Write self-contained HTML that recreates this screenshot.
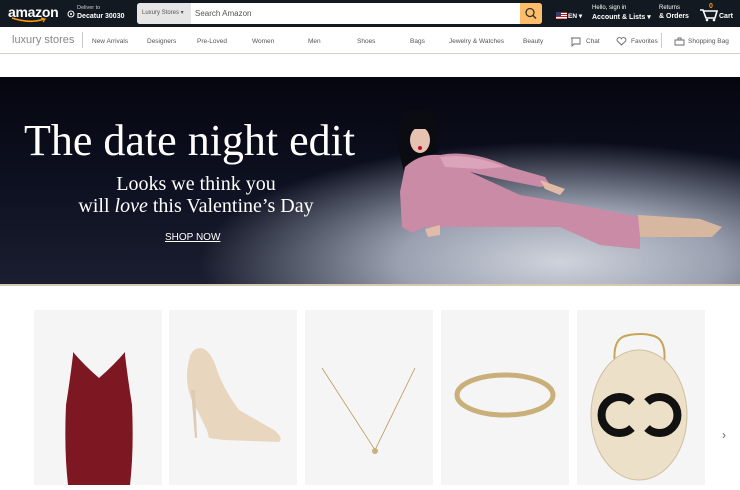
<!DOCTYPE html>
<html><head><meta charset="utf-8"><style>
*{margin:0;padding:0;box-sizing:border-box}
body{width:740px;height:485px;overflow:hidden;background:#fff;font-family:"Liberation Sans",sans-serif;position:relative}
.top{position:absolute;left:0;top:0;width:740px;height:27px;background:#131921;color:#fff}
.a{position:absolute;white-space:nowrap}
.nav{position:absolute;top:27px;left:0;width:740px;height:27px;border-bottom:1px solid #d9cfc2;font-size:6.5px;color:#555}
.banner{position:absolute;left:0;top:77px;width:740px;height:209px;background:radial-gradient(ellipse 360px 120px at 560px 185px,#cfd3dc 0%,#9aa0b0 45%,rgba(20,22,40,0) 100%),linear-gradient(180deg,#05060f 0%,#0d1020 50%,#1a1e30 100%);overflow:hidden;border-bottom:2px solid #d8c9ae}
.serif{font-family:"Liberation Serif",serif;color:#fff}
.card{position:absolute;top:310px;width:128px;height:175px;background:#f5f5f5}
</style></head><body>
<div class="top">
 <div class="a" style="left:8px;top:4px;font-size:14px;font-weight:bold;letter-spacing:-0.3px">amazon</div>
 <svg class="a" style="left:10px;top:17px" width="40" height="6"><path d="M2 1 Q20 7 34 2" stroke="#f90" stroke-width="1.6" fill="none"/><path d="M31 1 L35 2 L33 5" stroke="#f90" stroke-width="1.2" fill="none"/></svg>
 <svg class="a" style="left:67px;top:10px" width="8" height="9"><circle cx="4" cy="4" r="3" stroke="#fff" fill="none" stroke-width="1"/><circle cx="4" cy="4" r="1" fill="#fff"/></svg>
 <div class="a" style="left:77px;top:5px;font-size:5.5px;color:#ccc">Deliver to</div>
 <div class="a" style="left:77px;top:13px;font-size:7px;font-weight:bold">Decatur 30030</div>
 <div class="a" style="left:137px;top:3px;width:405px;height:21px;background:#fff;border-radius:3px;overflow:hidden">
  <div class="a" style="left:0;top:0;width:54px;height:21px;background:#e6e6e6;color:#555;font-size:6px;line-height:21px;padding-left:5px">Luxury Stores ▾</div>
  <div class="a" style="left:58px;top:0;line-height:21px;font-size:8px;color:#555">Search Amazon</div>
  <div class="a" style="right:0;top:0;width:22px;height:21px;background:#febd69"><svg width="22" height="21"><circle cx="10" cy="9.5" r="4" stroke="#333" stroke-width="1.3" fill="none"/><path d="M13 12.5L16 15.5" stroke="#333" stroke-width="1.5"/></svg></div>
 </div>
 <div class="a" style="left:556px;top:12px;width:11px;height:7px;background:linear-gradient(#b22 0 15%,#fff 15% 30%,#b22 30% 45%,#fff 45% 60%,#b22 60% 75%,#fff 75% 90%,#b22 90%)"><div style="width:5px;height:4px;background:#3c3b6e"></div></div>
 <div class="a" style="left:568px;top:12px;font-size:6.5px;font-weight:bold">EN ▾</div>
 <div class="a" style="left:592px;top:5px;font-size:6px">Hello, sign in</div>
 <div class="a" style="left:592px;top:13px;font-size:7px;font-weight:bold">Account &amp; Lists ▾</div>
 <div class="a" style="left:659px;top:5px;font-size:6px">Returns</div>
 <div class="a" style="left:659px;top:13px;font-size:7px;font-weight:bold">&amp; Orders</div>
 <svg class="a" style="left:699px;top:5px" width="20" height="17"><path d="M1 5H4L7 13H16L18 6H5" stroke="#fff" stroke-width="1.6" fill="none"/><circle cx="8" cy="15" r="1.3" fill="#fff"/><circle cx="15" cy="15" r="1.3" fill="#fff"/></svg>
 <div class="a" style="left:709px;top:3px;font-size:7px;font-weight:bold;color:#f90">0</div>
 <div class="a" style="left:719px;top:13px;font-size:7px;font-weight:bold">Cart</div>
</div>
<div class="nav">
 <div class="a" style="left:12px;top:7px;font-size:11px;color:#888">luxury stores</div>
 <div class="a" style="left:82px;top:5px;width:1px;height:16px;background:#ccc"></div>
 <div class="a" style="left:92px;top:11px">New Arrivals</div>
 <div class="a" style="left:147px;top:11px">Designers</div>
 <div class="a" style="left:197px;top:11px">Pre-Loved</div>
 <div class="a" style="left:252px;top:11px">Women</div>
 <div class="a" style="left:308px;top:11px">Men</div>
 <div class="a" style="left:357px;top:11px">Shoes</div>
 <div class="a" style="left:410px;top:11px">Bags</div>
 <div class="a" style="left:449px;top:11px">Jewelry &amp; Watches</div>
 <div class="a" style="left:523px;top:11px">Beauty</div>
 <svg class="a" style="left:570px;top:10px" width="11" height="10"><path d="M1 1H10V7H4L2 9V1Z" stroke="#666" fill="none" stroke-width="0.9"/></svg>
 <div class="a" style="left:586px;top:11px">Chat</div>
 <svg class="a" style="left:616px;top:10px" width="11" height="9"><path d="M5.5 8L1.3 4A2.2 2.2 0 0 1 5.5 1.8A2.2 2.2 0 0 1 9.7 4Z" stroke="#666" fill="none" stroke-width="0.9"/></svg>
 <div class="a" style="left:631px;top:11px">Favorites</div>
 <div class="a" style="left:661px;top:6px;width:1px;height:15px;background:#ccc"></div>
 <svg class="a" style="left:674px;top:10px" width="11" height="9"><path d="M1 3H10V8H1Z M4 3V1H7V3" stroke="#666" fill="none" stroke-width="0.9"/></svg>
 <div class="a" style="left:688px;top:11px">Shopping Bag</div>
</div>
<div class="banner">
 <svg class="a" style="left:0;top:0" width="740" height="209">
  <path d="M400 45 Q402 32 418 32 Q434 32 436 45 L438 70 L436 95 L404 95 L398 70Z" fill="#0b0b12"/>
  <ellipse cx="420" cy="63" rx="10" ry="13" fill="#e6c2b0"/>
  <path d="M409 52 Q412 40 420 40 Q430 40 432 52Z" fill="#0b0b12"/>
  <circle cx="420" cy="71" r="2" fill="#c0102a"/>
  <path d="M405 90 Q420 76 440 78 Q470 72 510 90 L545 100 L550 108 L540 110 L500 102 L470 95 L520 118 L590 130 L640 140 L640 172 L600 168 L560 150 L470 150 L425 150 L412 156 L402 150 L400 115Z" fill="#c98ba6"/>
  <path d="M440 80 Q470 76 505 90 L480 92 L445 90Z" fill="#dba4bb"/>
  <path d="M540 103 L565 112 L560 118 L545 112Z" fill="#e0bba8"/>
  <path d="M638 138 L700 142 L722 150 L712 160 L640 160Z" fill="#d8b7a0"/>
  <path d="M425 152 L440 148 L440 158 L428 160Z" fill="#e0bba8"/>
 </svg>
 <div class="a serif" style="left:24px;top:38px;font-size:44px">The date night edit</div>
 <div class="a serif" style="left:60px;top:96px;width:272px;text-align:center;font-size:20px;line-height:22px">Looks we think you<br>will <i>love</i> this Valentine’s Day</div>
 <div class="a" style="left:165px;top:155px;font-size:10px;color:#fff;text-decoration:underline">SHOP NOW</div>
</div>
<div class="card" style="left:34px"><svg width="128" height="175"><path d="M39 20 L39 45 Q36 70 32 95 Q30 140 34 175 H96 Q100 140 98 95 Q94 70 91 45 L91 20 L91 42 Q80 55 65 68 Q50 55 39 42Z" fill="#7d1722"/></svg></div>
<div class="card" style="left:169px"><svg width="128" height="175"><path d="M20 50 Q15 70 22 88 L38 120 L40 128 L55 130 L110 132 Q115 128 105 120 L70 100 Q55 80 48 60 Q42 40 32 38 Q22 38 20 50Z" fill="#e9d6bf"/><path d="M22 80 L26 80 L28 128 L26 128Z" fill="#ddcbb4"/></svg></div>
<div class="card" style="left:305px"><svg width="128" height="175"><path d="M17 58 L70 140 L110 58" stroke="#b89a5a" stroke-width="0.8" fill="none"/><circle cx="70" cy="141" r="3" fill="#c9b27a"/></svg></div>
<div class="card" style="left:441px"><svg width="128" height="175"><ellipse cx="64" cy="85" rx="48" ry="20" stroke="#c9b07a" stroke-width="5" fill="none"/></svg></div>
<div class="card" style="left:577px"><svg width="128" height="175"><path d="M38 55 Q35 30 48 26 Q64 22 77 26 Q90 30 87 55" stroke="#c7a45a" stroke-width="2" fill="none"/><ellipse cx="62" cy="105" rx="48" ry="65" fill="#ede0c8" stroke="#cfc0a0"/><path d="M55 92 A18 18 0 1 0 55 118 M70 92 A18 18 0 1 1 70 118" stroke="#111" stroke-width="8" fill="none"/></svg></div>
<div class="a" style="left:722px;top:428px;font-size:12px;color:#666">›</div>
</body></html>
